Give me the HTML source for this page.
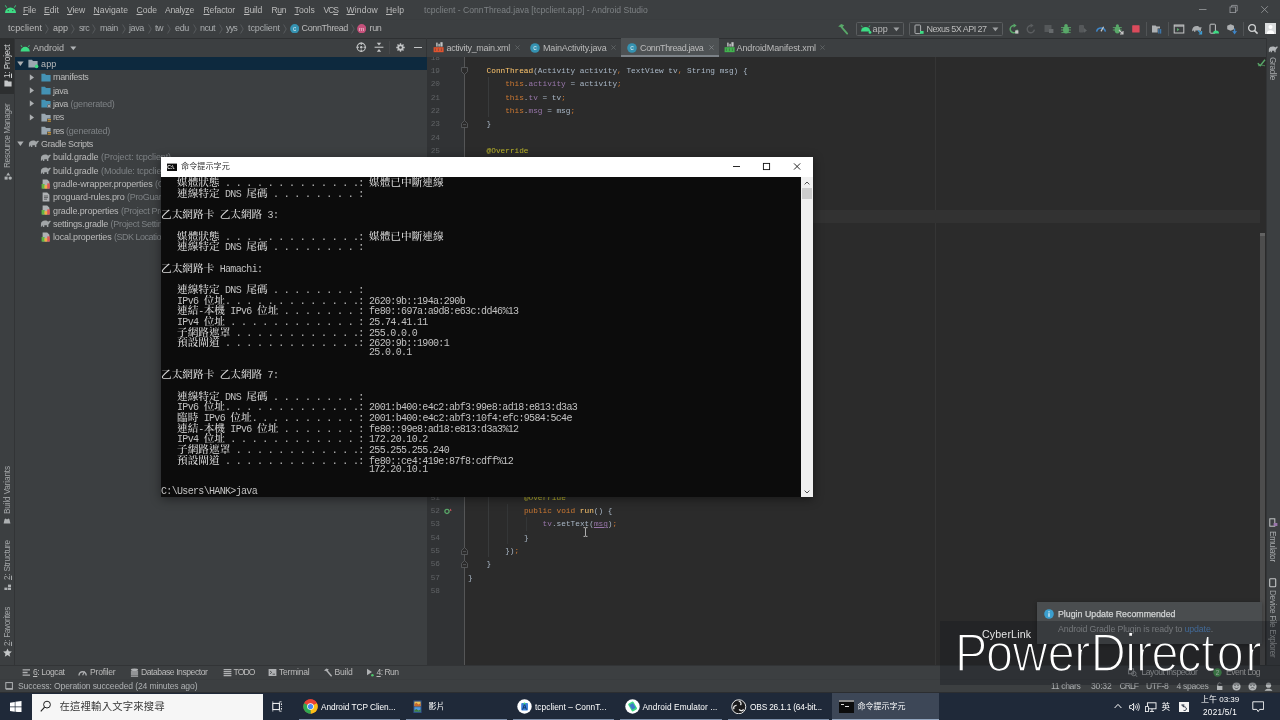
<!DOCTYPE html>
<html lang="zh-Hant"><head><meta charset="utf-8"><title>tcpclient - ConnThread.java [tcpclient.app] - Android Studio</title>
<style>
*{box-sizing:border-box;margin:0;padding:0}
html,body{width:1280px;height:720px;overflow:hidden;background:#3c3f41}
body{position:relative;font-family:"Liberation Sans",sans-serif;}
#scr{position:absolute;left:0;top:0;width:1280px;height:720px;overflow:hidden;opacity:0.999}
.r{position:absolute;display:block}
.t{position:absolute;white-space:pre;height:14px;line-height:14px;font-family:"Liberation Sans","Noto Sans CJK TC",sans-serif}
.m{font-family:"Liberation Mono",monospace}
.cj{font-family:"Liberation Sans","Noto Sans CJK TC",sans-serif}
.v{transform-origin:0 0;transform:rotate(-90deg)}
.vr{transform-origin:0 0;transform:rotate(90deg)}
u{text-decoration:underline;text-underline-offset:0.6px;text-decoration-thickness:0.7px}
#con{position:absolute;left:161px;top:177px;width:640px;height:320px;background:#0c0c0c;overflow:hidden}
#con pre{position:absolute;left:0;top:0;height:10.667px;margin:0;font-family:"Liberation Mono",monospace;font-size:10px;line-height:10.667px;letter-spacing:-0.667px;color:#c2c2c2;white-space:pre}
#con pre b{font-weight:normal;font-family:"Noto Serif CJK TC","Noto Serif CJK SC","Noto Sans CJK TC",serif;font-size:10.667px;letter-spacing:0;line-height:10.667px;color:#dcdcdc;font-weight:500}
</style></head>
<body>
<div id="scr">
<div class="r" style="left:0.0px;top:0.0px;width:1280.0px;height:720.0px;background:#3c3f41;"></div>
<div class="r" style="left:0.0px;top:19.0px;width:1280.0px;height:0.7px;background:#3a3d3f;"></div>
<div class="r" style="left:426.7px;top:56.7px;width:840.3px;height:608.3px;background:#2b2b2b;"></div>
<div class="r" style="left:426.7px;top:56.7px;width:37.8px;height:608.3px;background:#313335;"></div>
<div class="r" style="left:464.0px;top:57.0px;width:0.8px;height:608.0px;background:#555657;"></div>
<div class="r" style="left:935.0px;top:57.0px;width:0.8px;height:608.0px;background:#353535;"></div>
<div class="r" style="left:465.0px;top:210.0px;width:795.0px;height:13.4px;background:#323232;"></div>
<div class="r" style="left:427.0px;top:38.0px;width:840.0px;height:19.0px;background:#3c3f41;"></div>
<div class="r" style="left:0.0px;top:37.5px;width:1280.0px;height:0.9px;background:#2e3032;"></div>
<div class="r" style="left:0.0px;top:38.0px;width:14.5px;height:627.0px;background:#3c3f41;"></div>
<div class="r" style="left:14.3px;top:38.0px;width:0.8px;height:627.0px;background:#323436;"></div>
<div class="r" style="left:1266.5px;top:38.0px;width:13.5px;height:627.0px;background:#3c3f41;"></div>
<div class="r" style="left:1266.0px;top:38.0px;width:0.8px;height:627.0px;background:#323436;"></div>
<div class="r" style="left:426.3px;top:38.0px;width:0.8px;height:19.0px;background:#323436;"></div>
<div class="r" style="left:0.0px;top:664.5px;width:1280.0px;height:0.8px;background:#323436;"></div>
<div class="r" style="left:0.0px;top:679.0px;width:1280.0px;height:0.7px;background:#393c3e;"></div>
<svg class="r" style="left:4.0px;top:4.0px;" width="13" height="10" viewBox="0 0 13 10"><path d="M1 9 A5.5 5.5 0 0 1 12 9 Z" fill="#3ddc84"/><path d="M2.6 3.6 L1.4 1.4 M10.4 3.6 L11.6 1.4" stroke="#3ddc84" stroke-width="0.9"/><circle cx="4.2" cy="6.6" r="0.6" fill="#3c3f41"/><circle cx="8.8" cy="6.6" r="0.6" fill="#3c3f41"/></svg>
<span class="t " style="left:23.0px;top:2.5px;font-size:8.60px;color:#bbbbbb;letter-spacing:-0.215px;"><u>F</u>ile</span>
<span class="t " style="left:44.0px;top:2.5px;font-size:8.60px;color:#bbbbbb;letter-spacing:0.045px;"><u>E</u>dit</span>
<span class="t " style="left:67.0px;top:2.5px;font-size:8.60px;color:#bbbbbb;letter-spacing:-0.121px;"><u>V</u>iew</span>
<span class="t " style="left:93.5px;top:2.5px;font-size:8.60px;color:#bbbbbb;letter-spacing:0.070px;"><u>N</u>avigate</span>
<span class="t " style="left:136.5px;top:2.5px;font-size:8.60px;color:#bbbbbb;letter-spacing:-0.015px;"><u>C</u>ode</span>
<span class="t " style="left:165.0px;top:2.5px;font-size:8.60px;color:#bbbbbb;letter-spacing:-0.228px;">Analy<u>z</u>e</span>
<span class="t " style="left:203.5px;top:2.5px;font-size:8.60px;color:#bbbbbb;letter-spacing:-0.125px;"><u>R</u>efactor</span>
<span class="t " style="left:244.0px;top:2.5px;font-size:8.60px;color:#bbbbbb;letter-spacing:-0.225px;"><u>B</u>uild</span>
<span class="t " style="left:271.5px;top:2.5px;font-size:8.60px;color:#bbbbbb;letter-spacing:-0.426px;">R<u>u</u>n</span>
<span class="t " style="left:294.5px;top:2.5px;font-size:8.60px;color:#bbbbbb;letter-spacing:0.085px;"><u>T</u>ools</span>
<span class="t " style="left:323.5px;top:2.5px;font-size:8.60px;color:#bbbbbb;letter-spacing:-1.061px;">VC<u>S</u></span>
<span class="t " style="left:346.5px;top:2.5px;font-size:8.60px;color:#bbbbbb;letter-spacing:0.152px;"><u>W</u>indow</span>
<span class="t " style="left:386.0px;top:2.5px;font-size:8.60px;color:#bbbbbb;letter-spacing:0.078px;"><u>H</u>elp</span>
<span class="t " style="left:424.0px;top:2.5px;font-size:8.60px;color:#7d8184;letter-spacing:-0.004px;">tcpclient - ConnThread.java [tcpclient.app] - Android Studio</span>
<svg class="r" style="left:1195.0px;top:0.0px;" width="85" height="19" viewBox="0 0 85 19"><path d="M4 9.5h7.5" stroke="#9a9da0" stroke-width="0.8"/><rect x="35" y="7" width="5.6" height="5.6" fill="none" stroke="#9a9da0" stroke-width="0.8"/><path d="M36.6 7V5.4h5.6V11h-1.6" fill="none" stroke="#9a9da0" stroke-width="0.8"/><path d="M66.3 6.2l6.6 6.6M72.9 6.2l-6.6 6.6" stroke="#9a9da0" stroke-width="0.8"/></svg>
<span class="t " style="left:8.0px;top:21.3px;font-size:9.00px;color:#bbb;letter-spacing:0.109px;">tcpclient</span>
<span class="t " style="left:53.0px;top:21.3px;font-size:9.00px;color:#bbb;letter-spacing:-0.006px;">app</span>
<span class="t " style="left:79.0px;top:21.3px;font-size:9.00px;color:#a9acae;letter-spacing:-0.666px;">src</span>
<span class="t " style="left:100.0px;top:21.3px;font-size:9.00px;color:#a9acae;letter-spacing:-0.377px;">main</span>
<span class="t " style="left:129.0px;top:21.3px;font-size:9.00px;color:#a9acae;letter-spacing:-0.378px;">java</span>
<span class="t " style="left:155.0px;top:21.3px;font-size:9.00px;color:#a9acae;letter-spacing:-0.500px;">tw</span>
<span class="t " style="left:175.0px;top:21.3px;font-size:9.00px;color:#a9acae;letter-spacing:-0.339px;">edu</span>
<span class="t " style="left:200.0px;top:21.3px;font-size:9.00px;color:#a9acae;letter-spacing:-0.503px;">ncut</span>
<span class="t " style="left:226.0px;top:21.3px;font-size:9.00px;color:#a9acae;letter-spacing:-0.833px;">yys</span>
<span class="t " style="left:248.0px;top:21.3px;font-size:9.00px;color:#a9acae;letter-spacing:-0.113px;">tcpclient</span>
<span class="t " style="left:301.5px;top:21.3px;font-size:9.00px;color:#bbb;letter-spacing:-0.353px;">ConnThread</span>
<span class="t " style="left:369.5px;top:21.3px;font-size:9.00px;color:#bbb;letter-spacing:-0.336px;">run</span>
<svg class="r" style="left:45.0px;top:23.5px;" width="4" height="10" viewBox="0 0 4 10"><path d="M0.6 0.5L3.2 5L0.6 9.5" fill="none" stroke="#5e6264" stroke-width="0.8"/></svg>
<svg class="r" style="left:71.0px;top:23.5px;" width="4" height="10" viewBox="0 0 4 10"><path d="M0.6 0.5L3.2 5L0.6 9.5" fill="none" stroke="#5e6264" stroke-width="0.8"/></svg>
<svg class="r" style="left:92.0px;top:23.5px;" width="4" height="10" viewBox="0 0 4 10"><path d="M0.6 0.5L3.2 5L0.6 9.5" fill="none" stroke="#5e6264" stroke-width="0.8"/></svg>
<svg class="r" style="left:121.5px;top:23.5px;" width="4" height="10" viewBox="0 0 4 10"><path d="M0.6 0.5L3.2 5L0.6 9.5" fill="none" stroke="#5e6264" stroke-width="0.8"/></svg>
<svg class="r" style="left:147.5px;top:23.5px;" width="4" height="10" viewBox="0 0 4 10"><path d="M0.6 0.5L3.2 5L0.6 9.5" fill="none" stroke="#5e6264" stroke-width="0.8"/></svg>
<svg class="r" style="left:167.0px;top:23.5px;" width="4" height="10" viewBox="0 0 4 10"><path d="M0.6 0.5L3.2 5L0.6 9.5" fill="none" stroke="#5e6264" stroke-width="0.8"/></svg>
<svg class="r" style="left:192.5px;top:23.5px;" width="4" height="10" viewBox="0 0 4 10"><path d="M0.6 0.5L3.2 5L0.6 9.5" fill="none" stroke="#5e6264" stroke-width="0.8"/></svg>
<svg class="r" style="left:218.5px;top:23.5px;" width="4" height="10" viewBox="0 0 4 10"><path d="M0.6 0.5L3.2 5L0.6 9.5" fill="none" stroke="#5e6264" stroke-width="0.8"/></svg>
<svg class="r" style="left:240.0px;top:23.5px;" width="4" height="10" viewBox="0 0 4 10"><path d="M0.6 0.5L3.2 5L0.6 9.5" fill="none" stroke="#5e6264" stroke-width="0.8"/></svg>
<svg class="r" style="left:283.0px;top:23.5px;" width="4" height="10" viewBox="0 0 4 10"><path d="M0.6 0.5L3.2 5L0.6 9.5" fill="none" stroke="#5e6264" stroke-width="0.8"/></svg>
<svg class="r" style="left:351.0px;top:23.5px;" width="4" height="10" viewBox="0 0 4 10"><path d="M0.6 0.5L3.2 5L0.6 9.5" fill="none" stroke="#5e6264" stroke-width="0.8"/></svg>
<svg class="r" style="left:289.5px;top:23.5px;" width="9.4" height="9.4" viewBox="0 0 9.4 9.4"><circle cx="4.7" cy="4.7" r="4.6" fill="#3592b1"/><text x="4.7" y="7" font-size="6.5" font-family="Liberation Sans,sans-serif" text-anchor="middle" fill="#d6e9f0">c</text></svg>
<svg class="r" style="left:357.0px;top:23.5px;" width="9.4" height="9.4" viewBox="0 0 9.4 9.4"><circle cx="4.7" cy="4.7" r="4.6" fill="#c5517b"/><text x="4.7" y="6.8" font-size="6.2" font-family="Liberation Sans,sans-serif" text-anchor="middle" fill="#f3d6e0">m</text></svg>
<svg class="r" style="left:836.0px;top:22.5px;" width="13" height="12" viewBox="0 0 13 12"><path d="M2.2 3.6L5.2 1l3 1.2-2 2.2z" fill="#59a869"/><path d="M5.6 4.2l5.6 6.4" stroke="#59a869" stroke-width="1.8" stroke-linecap="round"/></svg>
<div class="r" style="left:855.5px;top:21.5px;width:48.5px;height:14.5px;background:transparent;border:0.8px solid #5a5d5f;border-radius:1.5px"></div>
<svg class="r" style="left:860.0px;top:24.0px;" width="12" height="10" viewBox="0 0 12 10"><path d="M1 7.6A4.6 4.6 0 0 1 10.2 7.6Z" fill="#3ddc84"/><path d="M2.4 3.3L1.4 1.5M8.8 3.3l1-1.8" stroke="#3ddc84" stroke-width="0.8"/><circle cx="10" cy="8.4" r="1.4" fill="#3ddc84"/></svg>
<span class="t " style="left:872.5px;top:21.7px;font-size:9.00px;color:#bbb;letter-spacing:0.161px;">app</span>
<svg class="r" style="left:893.0px;top:26.5px;" width="7" height="5" viewBox="0 0 7 5"><path d="M0.4 0.6h6L3.4 4.2z" fill="#9da0a2"/></svg>
<div class="r" style="left:908.5px;top:21.5px;width:94.0px;height:14.5px;background:transparent;border:0.8px solid #5a5d5f;border-radius:1.5px"></div>
<svg class="r" style="left:914.0px;top:23.5px;" width="11" height="11" viewBox="0 0 11 11"><rect x="1" y="1" width="5.6" height="8.6" rx="0.8" fill="none" stroke="#afb1b3" stroke-width="1"/><rect x="6" y="7" width="3.6" height="2.8" fill="#3ddc84"/></svg>
<span class="t " style="left:926.5px;top:21.7px;font-size:9.00px;color:#bbb;letter-spacing:-0.536px;">Nexus 5X API 27</span>
<svg class="r" style="left:991.5px;top:26.5px;" width="7" height="5" viewBox="0 0 7 5"><path d="M0.4 0.6h6L3.4 4.2z" fill="#9da0a2"/></svg>
<svg class="r" style="left:1008.0px;top:22.7px;" width="12" height="12" viewBox="0 0 12 12"><path d="M9.4 6.6A3.6 3.6 0 1 1 6.4 2.6" fill="none" stroke="#59a869" stroke-width="1.5"/><path d="M5.6 0.4l3 2.2-3 2.2z" fill="#59a869"/><rect x="7.2" y="7.4" width="3.2" height="3.2" fill="#c8c8c8"/></svg>
<svg class="r" style="left:1025.0px;top:22.7px;" width="12" height="12" viewBox="0 0 12 12"><path d="M9.4 6.6A3.6 3.6 0 1 1 6.4 2.6" fill="none" stroke="#5a5d5f" stroke-width="1.4"/><path d="M5.6 0.4l3 2.2-3 2.2z" fill="#5a5d5f"/></svg>
<svg class="r" style="left:1042.5px;top:22.7px;" width="12" height="12" viewBox="0 0 12 12"><rect x="1.5" y="2" width="7" height="7" fill="#55585a"/><rect x="6" y="6" width="4.4" height="4" fill="#666a6c"/></svg>
<svg class="r" style="left:1060.0px;top:22.7px;" width="12" height="12" viewBox="0 0 12 12"><ellipse cx="6" cy="6.8" rx="3" ry="3.8" fill="#59a869"/><circle cx="6" cy="2.6" r="1.7" fill="#59a869"/><path d="M1 4.6h10M1 7h10M1.4 9.6h9.2" stroke="#59a869" stroke-width="0.9"/></svg>
<svg class="r" style="left:1077.0px;top:22.7px;" width="12" height="12" viewBox="0 0 12 12"><rect x="2" y="2" width="5" height="7.5" rx="1" fill="#55585a"/><path d="M7 5l3 2.4-3 2.4z" fill="#5d6163"/></svg>
<svg class="r" style="left:1094.5px;top:22.7px;" width="12" height="12" viewBox="0 0 12 12"><path d="M1.6 8.6A4.5 4.5 0 0 1 10.4 8.6" fill="none" stroke="#3e86c9" stroke-width="1.5"/><path d="M6 8.4L8.6 3.8" stroke="#c8c8c8" stroke-width="1.2"/></svg>
<svg class="r" style="left:1112.0px;top:22.7px;" width="12" height="12" viewBox="0 0 12 12"><ellipse cx="5.4" cy="6.8" rx="2.8" ry="3.6" fill="#59a869"/><circle cx="5.4" cy="2.8" r="1.6" fill="#59a869"/><path d="M0.8 4.6h9M0.8 7h9" stroke="#59a869" stroke-width="0.9"/><path d="M7 7l4 4M11 8v3h-3" stroke="#c8c8c8" stroke-width="1.1" fill="none"/></svg>
<svg class="r" style="left:1129.5px;top:22.7px;" width="12" height="12" viewBox="0 0 12 12"><rect x="2.2" y="2.2" width="7.4" height="7.4" rx="0.6" fill="#db4b5c"/></svg>
<div class="r" style="left:1146.0px;top:22.0px;width:0.8px;height:13.5px;background:#515456;"></div>
<svg class="r" style="left:1151.0px;top:22.7px;" width="12" height="12" viewBox="0 0 12 12"><path d="M1 2.4h3.6l1 1.2H9v6H1z" fill="#aeb1b3"/><rect x="6.6" y="5.4" width="4" height="5.4" fill="#3c3f41"/><rect x="7.4" y="6" width="1" height="4.6" fill="#3e86c9"/><rect x="9.2" y="6" width="1" height="4.6" fill="#3e86c9"/></svg>
<div class="r" style="left:1168.0px;top:22.0px;width:0.8px;height:13.5px;background:#515456;"></div>
<svg class="r" style="left:1173.0px;top:22.7px;" width="12" height="12" viewBox="0 0 12 12"><rect x="1.2" y="2" width="9.6" height="8" fill="none" stroke="#c3c5c6" stroke-width="1"/><path d="M1.2 3h9.6" stroke="#c3c5c6" stroke-width="1.2"/><path d="M4 5l2.4 1.6L4 8.2z" fill="#59a869"/></svg>
<svg class="r" style="left:1190.5px;top:22.7px;" width="12" height="12" viewBox="0 0 12 12"><path d="M1 8.4c0-3.6 2-5.4 4.8-5.4 1.6 0 2.4.6 3 1.6l1.8-.6-.6 2.4c0 1.4-.6 2.4-1.4 2.4V7.6H4.4v1.2H3V7.6c-.8 0-1.2.4-2 .8z" fill="#a9acae"/><path d="M7 7.4l3.4 3.4M10.6 8v3H7.8" stroke="#3e9fd6" stroke-width="1.1" fill="none"/></svg>
<svg class="r" style="left:1208.0px;top:22.7px;" width="12" height="12" viewBox="0 0 12 12"><rect x="2" y="1.2" width="5.4" height="9" rx="0.8" fill="none" stroke="#c3c5c6" stroke-width="1"/><path d="M5 10.6a3 3 0 0 1 6 0z" fill="#3ddc84"/></svg>
<svg class="r" style="left:1225.5px;top:22.7px;" width="12" height="12" viewBox="0 0 12 12"><path d="M4.6 1.2l3.4 1.6v3.4L4.6 7.8 1.2 6.2V2.8z" fill="#aeb1b3"/><path d="M8.6 5.4v4M6.8 8l1.8 2.4L10.4 8" stroke="#3e86c9" stroke-width="1.2" fill="none"/></svg>
<div class="r" style="left:1242.5px;top:22.0px;width:0.8px;height:13.5px;background:#515456;"></div>
<svg class="r" style="left:1247.0px;top:22.7px;" width="12" height="12" viewBox="0 0 12 12"><circle cx="5" cy="5" r="3.4" fill="none" stroke="#d0d2d3" stroke-width="1.3"/><path d="M7.6 7.6l3 3" stroke="#d0d2d3" stroke-width="1.5"/></svg>
<div class="r" style="left:1265.0px;top:23.0px;width:11.0px;height:11.0px;background:#dadcdd;"></div>
<svg class="r" style="left:1265.0px;top:23.0px;" width="11" height="11" viewBox="0 0 11 11"><circle cx="5.5" cy="4" r="2" fill="#fff"/><path d="M1.8 11a3.7 3.7 0 0 1 7.4 0z" fill="#fff"/></svg>
<div class="r" style="left:0.0px;top:38.0px;width:14.3px;height:56.0px;background:#2d2f30;"></div>
<span class="t v" style="left:1.2px;top:77.7px;font-size:8.20px;color:#d2d4d5;letter-spacing:-0.114px"><u>1</u>: Project</span>
<svg class="r" style="left:4.0px;top:80.3px;" width="8" height="7" viewBox="0 0 8 7"><path d="M0.4 0.6h3l.8 1h3.4v5H.4z" fill="#c5c7c8"/></svg>
<span class="t v" style="left:1.0px;top:168.3px;font-size:8.20px;color:#a4a7a9;letter-spacing:-0.327px">Resource Manager</span>
<svg class="r" style="left:3.8px;top:171.5px;" width="8.5" height="8.5" viewBox="0 0 8.5 8.5"><path d="M4.2 0.4l2 3H2.2z" fill="#aeb1b3"/><rect x="0.6" y="4.6" width="3" height="3" fill="#aeb1b3"/><circle cx="6.2" cy="6.1" r="1.7" fill="#aeb1b3"/></svg>
<span class="t v" style="left:1.0px;top:514.0px;font-size:8.20px;color:#a4a7a9;letter-spacing:-0.142px">Build Variants</span>
<svg class="r" style="left:3.4px;top:518.0px;" width="8" height="6" viewBox="0 0 8 6"><path d="M0.6 5.6L1.6 1.2 2.6 0.4 4 1.4 5.4 0.4 6.4 1.2 7.4 5.6z" fill="#aeb1b3"/></svg>
<span class="t v" style="left:1.0px;top:580.0px;font-size:8.20px;color:#a4a7a9;letter-spacing:-0.199px"><u>2</u>: Structure</span>
<svg class="r" style="left:3.6px;top:583.5px;" width="7.6" height="6.5" viewBox="0 0 7.6 6.5"><rect x="0.4" y="3.6" width="3" height="2.6" fill="#aeb1b3"/><rect x="4" y="0.6" width="3" height="2.4" fill="#aeb1b3"/><rect x="4" y="3.6" width="3" height="2.6" fill="#aeb1b3"/></svg>
<span class="t v" style="left:1.0px;top:646.0px;font-size:8.20px;color:#a4a7a9;letter-spacing:-0.320px"><u>2</u>: Favorites</span>
<svg class="r" style="left:3.0px;top:648.0px;" width="9" height="9" viewBox="0 0 9 9"><path d="M4.5 0.4l1.25 2.9 3.1.3-2.35 2.05.7 3.05L4.5 7.1 1.8 8.7l.7-3.05L.15 3.6l3.1-.3z" fill="#c5c7c8"/></svg>
<svg class="r" style="left:1268.0px;top:45.0px;" width="10.5" height="7.728" viewBox="0 0 12.5 9.2"><path d="M1 8.6V5.6C1 3 3 1.7 5.6 1.7c1.5 0 2.5.5 3.3 1.2.8-.8 2-1.4 2.8-.6.4.6-.2 1.2-.8.8-.4 1.4-1 2.4-1.8 2.8v2.7H7.5V6.9H4.7v1.7H3.1V6.9C2.5 6.9 2.4 8.6 1 8.6z" fill="#b4b7b9"/></svg>
<span class="t vr" style="left:1279.0px;top:56.5px;font-size:8.20px;color:#a9acae;letter-spacing:-0.269px">Gradle</span>
<svg class="r" style="left:1268.5px;top:517.5px;" width="9" height="9" viewBox="0 0 9 9"><rect x="0.8" y="0.8" width="5" height="7.4" fill="none" stroke="#c3c5c6" stroke-width="1"/><rect x="4.6" y="5" width="3.8" height="3" fill="#9876aa"/></svg>
<span class="t vr" style="left:1279.2px;top:530.5px;font-size:8.20px;color:#a9acae;letter-spacing:-0.227px">Emulator</span>
<svg class="r" style="left:1269.0px;top:578.0px;" width="7.5" height="9.5" viewBox="0 0 7.5 9.5"><rect x="0.7" y="0.7" width="6" height="8" rx="0.8" fill="none" stroke="#c3c5c6" stroke-width="1.1"/></svg>
<span class="t vr" style="left:1279.2px;top:590.0px;font-size:8.20px;color:#9ea1a3;letter-spacing:-0.294px">Device File Explorer</span>
<svg class="r" style="left:20.0px;top:43.5px;" width="10.5" height="8" viewBox="0 0 10.5 8"><path d="M0.6 7.4A4.6 4.6 0 0 1 9.8 7.4Z" fill="#3ddc84"/><path d="M2 3l-1-1.8M8.4 3l1-1.8" stroke="#3ddc84" stroke-width="0.8"/></svg>
<span class="t " style="left:33.0px;top:40.8px;font-size:9.00px;color:#bbb;letter-spacing:-0.003px;">Android</span>
<svg class="r" style="left:70.0px;top:46.0px;" width="7" height="5" viewBox="0 0 7 5"><path d="M0.3 0.5h6L3.3 4.2z" fill="#b0b3b5"/></svg>
<svg class="r" style="left:356.0px;top:42.0px;" width="10.5" height="10.5" viewBox="0 0 10.5 10.5"><circle cx="5.25" cy="5.25" r="4.1" fill="none" stroke="#c3c5c6" stroke-width="1.1"/><circle cx="5.25" cy="5.25" r="1.2" fill="#c3c5c6"/><path d="M5.25 0.4v2.6M5.25 7.5v2.6M.4 5.25H3M7.5 5.25h2.6" stroke="#c3c5c6" stroke-width="1.1"/></svg>
<svg class="r" style="left:373.5px;top:42.0px;" width="10" height="10.5" viewBox="0 0 10 10.5"><path d="M0.6 5.25h8.8" stroke="#c3c5c6" stroke-width="1.1"/><path d="M2.8 0.8h4.4L5 3.4zM2.8 9.7h4.4L5 7.1z" fill="#c3c5c6"/></svg>
<div class="r" style="left:389.3px;top:41.0px;width:0.7px;height:13.0px;background:#47494b;"></div>
<svg class="r" style="left:396.0px;top:42.8px;" width="9" height="9" viewBox="0 0 10.5 10.5"><circle cx="5.25" cy="5.25" r="2.6" fill="none" stroke="#c3c5c6" stroke-width="2"/><path d="M5.25 0.3v2M5.25 8.2v2M.3 5.25h2M8.2 5.25h2M1.75 1.75l1.4 1.4M7.35 7.35l1.4 1.4M8.75 1.75l-1.4 1.4M3.15 7.35l-1.4 1.4" stroke="#c3c5c6" stroke-width="1.6"/></svg>
<div class="r" style="left:414.0px;top:46.6px;width:8.0px;height:1.0px;background:#c3c5c6;"></div>
<div class="r" style="left:15.0px;top:57.0px;width:411.5px;height:13.3px;background:#0d293e;"></div>
<svg class="r" style="left:16.5px;top:60.7px;" width="7" height="6" viewBox="0 0 7 6"><path d="M0.2 0.6h6.4L3.4 5z" fill="#adb0b2"/></svg>
<svg class="r" style="left:28.0px;top:59.2px;" width="11" height="9.5" viewBox="0 0 11 9.5"><path d="M0.4 0.8h3.6l1 1.2h4.6v6.4H.4z" fill="#9aa7b0"/><circle cx="8.6" cy="7.4" r="1.8" fill="#3ddc84"/></svg>
<span class="t " style="left:41.0px;top:57.0px;font-size:9.00px;color:#bbbbbb;letter-spacing:0.161px;">app</span>
<svg class="r" style="left:28.5px;top:73.5px;" width="6" height="7" viewBox="0 0 6 7"><path d="M0.8 0.2v6.4L5 3.4z" fill="#adb0b2"/></svg>
<svg class="r" style="left:40.5px;top:72.5px;" width="11" height="9.5" viewBox="0 0 11 9.5"><path d="M0.4 0.8h3.6l1 1.2h4.6v6.4H.4z" fill="#4492b4"/></svg>
<span class="t " style="left:53.0px;top:70.3px;font-size:9.00px;color:#bbbbbb;letter-spacing:-0.335px;">manifests</span>
<svg class="r" style="left:28.5px;top:86.8px;" width="6" height="7" viewBox="0 0 6 7"><path d="M0.8 0.2v6.4L5 3.4z" fill="#adb0b2"/></svg>
<svg class="r" style="left:40.5px;top:85.8px;" width="11" height="9.5" viewBox="0 0 11 9.5"><path d="M0.4 0.8h3.6l1 1.2h4.6v6.4H.4z" fill="#4492b4"/></svg>
<span class="t " style="left:53.0px;top:83.6px;font-size:9.00px;color:#bbbbbb;letter-spacing:-0.378px;">java</span>
<svg class="r" style="left:28.5px;top:100.2px;" width="6" height="7" viewBox="0 0 6 7"><path d="M0.8 0.2v6.4L5 3.4z" fill="#adb0b2"/></svg>
<svg class="r" style="left:40.5px;top:99.2px;" width="11" height="9.5" viewBox="0 0 11 9.5"><path d="M0.4 0.8h3.6l1 1.2h4.6v6.4H.4z" fill="#4492b4"/><circle cx="8" cy="7" r="2" fill="#3c3f41"/><path d="M6.6 5.6l2.8 2.8M9.4 5.6L6.6 8.4M8 5v4M6 7h4" stroke="#c3c5c6" stroke-width="0.6"/></svg>
<span class="t " style="left:53.0px;top:97.0px;font-size:9.00px;color:#bbbbbb;letter-spacing:-0.378px;">java</span>
<span class="t " style="left:70.6px;top:97.0px;font-size:9.00px;color:#7e8285;letter-spacing:-0.239px;">(generated)</span>
<svg class="r" style="left:28.5px;top:113.5px;" width="6" height="7" viewBox="0 0 6 7"><path d="M0.8 0.2v6.4L5 3.4z" fill="#adb0b2"/></svg>
<svg class="r" style="left:40.5px;top:112.5px;" width="11" height="9.5" viewBox="0 0 11 9.5"><path d="M0.4 0.8h3.6l1 1.2h4.6v6.4H.4z" fill="#9aa7b0"/><rect x="6" y="5.6" width="4.4" height="3.8" fill="#3c3f41"/><path d="M6.6 6.6h3.4M6.6 8.2h3.4" stroke="#e2a53a" stroke-width="0.9"/></svg>
<span class="t " style="left:53.0px;top:110.3px;font-size:9.00px;color:#bbbbbb;letter-spacing:-0.668px;">res</span>
<svg class="r" style="left:40.5px;top:125.8px;" width="11" height="9.5" viewBox="0 0 11 9.5"><path d="M0.4 0.8h3.6l1 1.2h4.6v6.4H.4z" fill="#9aa7b0"/><rect x="6" y="5.6" width="4.4" height="3.8" fill="#3c3f41"/><path d="M6.6 6.6h3.4M6.6 8.2h3.4" stroke="#e2a53a" stroke-width="0.9"/></svg>
<span class="t " style="left:53.0px;top:123.6px;font-size:9.00px;color:#bbbbbb;letter-spacing:-0.668px;">res</span>
<span class="t " style="left:66.1px;top:123.6px;font-size:9.00px;color:#7e8285;letter-spacing:-0.239px;">(generated)</span>
<svg class="r" style="left:16.5px;top:140.7px;" width="7" height="6" viewBox="0 0 7 6"><path d="M0.2 0.6h6.4L3.4 5z" fill="#adb0b2"/></svg>
<svg class="r" style="left:27.5px;top:139.4px;" width="11.5" height="8.464" viewBox="0 0 12.5 9.2"><path d="M1 8.6V5.6C1 3 3 1.7 5.6 1.7c1.5 0 2.5.5 3.3 1.2.8-.8 2-1.4 2.8-.6.4.6-.2 1.2-.8.8-.4 1.4-1 2.4-1.8 2.8v2.7H7.5V6.9H4.7v1.7H3.1V6.9C2.5 6.9 2.4 8.6 1 8.6z" fill="#a2a6a8"/></svg>
<span class="t " style="left:41.0px;top:137.0px;font-size:9.00px;color:#bbbbbb;letter-spacing:-0.359px;">Gradle Scripts</span>
<svg class="r" style="left:40.0px;top:152.7px;" width="11.5" height="8.464" viewBox="0 0 12.5 9.2"><path d="M1 8.6V5.6C1 3 3 1.7 5.6 1.7c1.5 0 2.5.5 3.3 1.2.8-.8 2-1.4 2.8-.6.4.6-.2 1.2-.8.8-.4 1.4-1 2.4-1.8 2.8v2.7H7.5V6.9H4.7v1.7H3.1V6.9C2.5 6.9 2.4 8.6 1 8.6z" fill="#a2a6a8"/></svg>
<span class="t " style="left:53.0px;top:150.3px;font-size:9.00px;color:#bbbbbb;letter-spacing:-0.086px;">build.gradle</span>
<span class="t " style="left:101.1px;top:150.3px;font-size:9.00px;color:#7e8285;letter-spacing:-0.106px;">(Project: tcpclient)</span>
<svg class="r" style="left:40.0px;top:166.0px;" width="11.5" height="8.464" viewBox="0 0 12.5 9.2"><path d="M1 8.6V5.6C1 3 3 1.7 5.6 1.7c1.5 0 2.5.5 3.3 1.2.8-.8 2-1.4 2.8-.6.4.6-.2 1.2-.8.8-.4 1.4-1 2.4-1.8 2.8v2.7H7.5V6.9H4.7v1.7H3.1V6.9C2.5 6.9 2.4 8.6 1 8.6z" fill="#a2a6a8"/></svg>
<span class="t " style="left:53.0px;top:163.6px;font-size:9.00px;color:#bbbbbb;letter-spacing:-0.086px;">build.gradle</span>
<span class="t " style="left:101.1px;top:163.6px;font-size:9.00px;color:#7e8285;letter-spacing:-0.180px;">(Module: tcpclient.app)</span>
<svg class="r" style="left:41.0px;top:178.7px;" width="10" height="10" viewBox="0 0 10 10"><path d="M1.6 0.6h4.6l2.2 2.2v6.6H1.6z" fill="#aeb1b3"/><rect x="0.6" y="5" width="3" height="4.6" fill="#62b543"/><rect x="3.6" y="6.2" width="2.6" height="3.4" fill="#f4af3d"/><rect x="6.2" y="4.4" width="2.6" height="5.2" fill="#e05555"/></svg>
<span class="t " style="left:53.0px;top:177.0px;font-size:9.00px;color:#bbbbbb;letter-spacing:-0.122px;">gradle-wrapper.properties</span>
<span class="t " style="left:155.1px;top:177.0px;font-size:9.00px;color:#7e8285;letter-spacing:-0.414px;">(Gradle Version)</span>
<svg class="r" style="left:41.0px;top:192.0px;" width="10" height="10" viewBox="0 0 10 10"><path d="M1.6 0.6h4.6l2.2 2.2v6.6H1.6z" fill="#aeb1b3"/><path d="M3 4h4M3 5.6h4M3 7.2h3" stroke="#3c3f41" stroke-width="0.7"/></svg>
<span class="t " style="left:53.0px;top:190.3px;font-size:9.00px;color:#bbbbbb;letter-spacing:-0.141px;">proguard-rules.pro</span>
<span class="t " style="left:127.1px;top:190.3px;font-size:9.00px;color:#7e8285;letter-spacing:-0.343px;">(ProGuard Rules for tcpclient.app)</span>
<svg class="r" style="left:41.0px;top:205.3px;" width="10" height="10" viewBox="0 0 10 10"><path d="M1.6 0.6h4.6l2.2 2.2v6.6H1.6z" fill="#aeb1b3"/><rect x="0.6" y="5" width="3" height="4.6" fill="#62b543"/><rect x="3.6" y="6.2" width="2.6" height="3.4" fill="#f4af3d"/><rect x="6.2" y="4.4" width="2.6" height="5.2" fill="#e05555"/></svg>
<span class="t " style="left:53.0px;top:203.6px;font-size:9.00px;color:#bbbbbb;letter-spacing:-0.120px;">gradle.properties</span>
<span class="t " style="left:121.1px;top:203.6px;font-size:9.00px;color:#7e8285;letter-spacing:-0.331px;">(Project Properties)</span>
<svg class="r" style="left:40.0px;top:219.4px;" width="11.5" height="8.464" viewBox="0 0 12.5 9.2"><path d="M1 8.6V5.6C1 3 3 1.7 5.6 1.7c1.5 0 2.5.5 3.3 1.2.8-.8 2-1.4 2.8-.6.4.6-.2 1.2-.8.8-.4 1.4-1 2.4-1.8 2.8v2.7H7.5V6.9H4.7v1.7H3.1V6.9C2.5 6.9 2.4 8.6 1 8.6z" fill="#a2a6a8"/></svg>
<span class="t " style="left:53.0px;top:217.0px;font-size:9.00px;color:#bbbbbb;letter-spacing:-0.236px;">settings.gradle</span>
<span class="t " style="left:110.6px;top:217.0px;font-size:9.00px;color:#7e8285;letter-spacing:-0.313px;">(Project Settings)</span>
<svg class="r" style="left:41.0px;top:232.0px;" width="10" height="10" viewBox="0 0 10 10"><path d="M1.6 0.6h4.6l2.2 2.2v6.6H1.6z" fill="#aeb1b3"/><rect x="0.6" y="5" width="3" height="4.6" fill="#62b543"/><rect x="3.6" y="6.2" width="2.6" height="3.4" fill="#f4af3d"/><rect x="6.2" y="4.4" width="2.6" height="5.2" fill="#e05555"/></svg>
<span class="t " style="left:53.0px;top:230.3px;font-size:9.00px;color:#bbbbbb;letter-spacing:-0.158px;">local.properties</span>
<span class="t " style="left:114.1px;top:230.3px;font-size:9.00px;color:#7e8285;letter-spacing:-0.509px;">(SDK Location)</span>
<div class="r" style="left:620.5px;top:38.0px;width:98.5px;height:18.5px;background:#4e5254;"></div>
<div class="r" style="left:620.5px;top:54.6px;width:98.5px;height:2.0px;background:#7c8288;"></div>
<svg class="r" style="left:432.5px;top:41.8px;" width="11" height="11" viewBox="0 0 11 11"><rect x="3.2" y="0.6" width="1.4" height="4" fill="#c3c5c6"/><rect x="5.4" y="1.8" width="1.4" height="2.8" fill="#c3c5c6"/><rect x="7.4" y="0.2" width="2.2" height="4.4" fill="#c3c5c6"/><rect x="0.6" y="5.2" width="10" height="5" fill="#e0532f"/><path d="M2.4 6.4v2.6M5.4 6.4v2.6M8.4 6.4v2.6" stroke="#3c3f41" stroke-width="0.9" opacity=".55"/></svg>
<span class="t " style="left:446.5px;top:40.6px;font-size:9.00px;color:#bbb;letter-spacing:-0.295px;">activity_main.xml</span>
<svg class="r" style="left:514.5px;top:45.1px;" width="5" height="5" viewBox="0 0 5 5"><path d="M0.4 0.4l4.2 4.2M4.6 0.4L0.4 4.6" stroke="#6a6e70" stroke-width="0.7"/></svg>
<svg class="r" style="left:530.0px;top:42.6px;" width="10" height="10" viewBox="0 0 10 10"><circle cx="5" cy="5" r="4.8" fill="#3592b1"/><text x="5" y="7.4" font-size="7" font-family="Liberation Sans,sans-serif" text-anchor="middle" fill="#d6e9f0">c</text></svg>
<span class="t " style="left:543.0px;top:40.6px;font-size:9.00px;color:#bbb;letter-spacing:-0.168px;">MainActivity.java</span>
<svg class="r" style="left:611.0px;top:45.1px;" width="5" height="5" viewBox="0 0 5 5"><path d="M0.4 0.4l4.2 4.2M4.6 0.4L0.4 4.6" stroke="#6a6e70" stroke-width="0.7"/></svg>
<svg class="r" style="left:627.0px;top:42.6px;" width="10" height="10" viewBox="0 0 10 10"><circle cx="5" cy="5" r="4.8" fill="#3592b1"/><text x="5" y="7.4" font-size="7" font-family="Liberation Sans,sans-serif" text-anchor="middle" fill="#d6e9f0">c</text></svg>
<span class="t " style="left:640.0px;top:40.6px;font-size:9.00px;color:#bbb;letter-spacing:-0.370px;">ConnThread.java</span>
<svg class="r" style="left:708.5px;top:45.1px;" width="5" height="5" viewBox="0 0 5 5"><path d="M0.4 0.4l4.2 4.2M4.6 0.4L0.4 4.6" stroke="#8a8e90" stroke-width="0.7"/></svg>
<svg class="r" style="left:723.5px;top:41.8px;" width="11" height="11" viewBox="0 0 11 11"><rect x="3.2" y="0.6" width="1.4" height="4" fill="#c3c5c6"/><rect x="5.4" y="1.8" width="1.4" height="2.8" fill="#c3c5c6"/><rect x="7.4" y="0.2" width="2.2" height="4.4" fill="#c3c5c6"/><rect x="0.6" y="5.2" width="10" height="5" fill="#41b44e"/><path d="M2.4 6.4v2.6M5.4 6.4v2.6M8.4 6.4v2.6" stroke="#3c3f41" stroke-width="0.9" opacity=".55"/></svg>
<span class="t " style="left:736.5px;top:40.6px;font-size:9.00px;color:#bbb;letter-spacing:-0.107px;">AndroidManifest.xml</span>
<svg class="r" style="left:820.0px;top:45.1px;" width="5" height="5" viewBox="0 0 5 5"><path d="M0.4 0.4l4.2 4.2M4.6 0.4L0.4 4.6" stroke="#6a6e70" stroke-width="0.7"/></svg>
<div class="r" style="left:427px;top:57px;width:840px;height:608px;overflow:hidden">
<span class="t m" style="left:-7.0px;top:-6.5px;font-size:7.78px;color:#606366;width:20px;text-align:right">18</span>
<span class="t m" style="left:-7.0px;top:6.8px;font-size:7.78px;color:#606366;width:20px;text-align:right">19</span>
<span class="t m" style="left:-7.0px;top:20.1px;font-size:7.78px;color:#606366;width:20px;text-align:right">20</span>
<span class="t m" style="left:-7.0px;top:33.5px;font-size:7.78px;color:#606366;width:20px;text-align:right">21</span>
<span class="t m" style="left:-7.0px;top:46.8px;font-size:7.78px;color:#606366;width:20px;text-align:right">22</span>
<span class="t m" style="left:-7.0px;top:60.1px;font-size:7.78px;color:#606366;width:20px;text-align:right">23</span>
<span class="t m" style="left:-7.0px;top:73.5px;font-size:7.78px;color:#606366;width:20px;text-align:right">24</span>
<span class="t m" style="left:-7.0px;top:86.8px;font-size:7.78px;color:#606366;width:20px;text-align:right">25</span>
<span class="t m" style="left:-7.0px;top:433.5px;font-size:7.78px;color:#606366;width:20px;text-align:right">51</span>
<span class="t m" style="left:-7.0px;top:446.8px;font-size:7.78px;color:#606366;width:20px;text-align:right">52</span>
<span class="t m" style="left:-7.0px;top:460.1px;font-size:7.78px;color:#606366;width:20px;text-align:right">53</span>
<span class="t m" style="left:-7.0px;top:473.5px;font-size:7.78px;color:#606366;width:20px;text-align:right">54</span>
<span class="t m" style="left:-7.0px;top:486.8px;font-size:7.78px;color:#606366;width:20px;text-align:right">55</span>
<span class="t m" style="left:-7.0px;top:500.1px;font-size:7.78px;color:#606366;width:20px;text-align:right">56</span>
<span class="t m" style="left:-7.0px;top:513.5px;font-size:7.78px;color:#606366;width:20px;text-align:right">57</span>
<span class="t m" style="left:-7.0px;top:526.8px;font-size:7.78px;color:#606366;width:20px;text-align:right">58</span>
<span class="t m" style="left:59.6px;top:6.8px;font-size:7.78px;color:#a9b7c6"><span style="color:#ffc66d">ConnThread</span>(Activity activity<span style="color:#cc7832">,</span> TextView tv<span style="color:#cc7832">,</span> String msg) {</span>
<span class="t m" style="left:78.2px;top:20.1px;font-size:7.78px;color:#a9b7c6"><span style="color:#cc7832">this</span>.<span style="color:#9876aa">activity</span> = activity<span style="color:#cc7832">;</span></span>
<span class="t m" style="left:78.2px;top:33.5px;font-size:7.78px;color:#a9b7c6"><span style="color:#cc7832">this</span>.<span style="color:#9876aa">tv</span> = tv<span style="color:#cc7832">;</span></span>
<span class="t m" style="left:78.2px;top:46.8px;font-size:7.78px;color:#a9b7c6"><span style="color:#cc7832">this</span>.<span style="color:#9876aa">msg</span> = msg<span style="color:#cc7832">;</span></span>
<span class="t m" style="left:59.6px;top:60.1px;font-size:7.78px;color:#a9b7c6">}</span>
<span class="t m" style="left:59.6px;top:86.8px;font-size:7.78px;color:#a9b7c6"><span style="color:#bbb529">@Override</span></span>
<span class="t m" style="left:96.9px;top:433.5px;font-size:7.78px;color:#a9b7c6"><span style="color:#bbb529">@Override</span></span>
<span class="t m" style="left:96.9px;top:446.8px;font-size:7.78px;color:#a9b7c6"><span style="color:#cc7832">public void </span><span style="color:#ffc66d">run</span>() {</span>
<span class="t m" style="left:115.6px;top:460.1px;font-size:7.78px;color:#a9b7c6"><span style="color:#9876aa">tv</span>.setText(<span style="color:#9876aa;text-decoration:underline">msg</span>)<span style="color:#cc7832">;</span></span>
<span class="t m" style="left:96.9px;top:473.5px;font-size:7.78px;color:#a9b7c6">}</span>
<span class="t m" style="left:78.2px;top:486.8px;font-size:7.78px;color:#a9b7c6">})<span style="color:#cc7832">;</span></span>
<span class="t m" style="left:59.6px;top:500.1px;font-size:7.78px;color:#a9b7c6">}</span>
<span class="t m" style="left:40.9px;top:513.5px;font-size:7.78px;color:#a9b7c6">}</span>
</div>
<div class="r" style="left:488.3px;top:77.4px;width:0.7px;height:40.0px;background:#393b3c;"></div>
<div class="r" style="left:488.3px;top:490.8px;width:0.7px;height:66.7px;background:#393b3c;"></div>
<div class="r" style="left:506.8px;top:504.1px;width:0.7px;height:40.0px;background:#343637;"></div>
<div class="r" style="left:526.0px;top:517.4px;width:0.7px;height:13.3px;background:#343637;"></div>
<svg class="r" style="left:460.5px;top:66.8px;" width="7" height="8" viewBox="0 0 7 8"><path d="M0.5 0.5h6v4L3.5 7.5 0.5 4.5z" fill="#2b2b2b" stroke="#5d6062" stroke-width="0.8"/></svg>
<svg class="r" style="left:460.5px;top:120.1px;" width="7" height="8" viewBox="0 0 7 8"><path d="M0.5 7.5h6v-4L3.5 0.5 0.5 3.5z" fill="#2b2b2b" stroke="#5d6062" stroke-width="0.8"/><path d="M2 4.6h3" stroke="#5d6062" stroke-width="0.8"/></svg>
<svg class="r" style="left:460.5px;top:546.8px;" width="7" height="8" viewBox="0 0 7 8"><path d="M0.5 7.5h6v-4L3.5 0.5 0.5 3.5z" fill="#2b2b2b" stroke="#5d6062" stroke-width="0.8"/><path d="M2 4.6h3" stroke="#5d6062" stroke-width="0.8"/></svg>
<svg class="r" style="left:460.5px;top:560.1px;" width="7" height="8" viewBox="0 0 7 8"><path d="M0.5 7.5h6v-4L3.5 0.5 0.5 3.5z" fill="#2b2b2b" stroke="#5d6062" stroke-width="0.8"/><path d="M2 4.6h3" stroke="#5d6062" stroke-width="0.8"/></svg>
<svg class="r" style="left:444.3px;top:507.5px;" width="9" height="7" viewBox="0 0 9 7"><circle cx="3" cy="3.4" r="2.1" fill="none" stroke="#59a869" stroke-width="1.3"/><path d="M5.6 2.8l1-2.2 1 2.2z" fill="#db5860"/></svg>
<svg class="r" style="left:1257.0px;top:58.5px;" width="9" height="8" viewBox="0 0 9 8"><path d="M0.8 4.2l2.4 2.6L8 0.8" fill="none" stroke="#59a869" stroke-width="1.4"/><path d="M1 6.8c2.4-.8 4.6-.8 7 0" stroke="#59a869" stroke-width="0.7" fill="none"/></svg>
<div class="r" style="left:1260.0px;top:233.0px;width:5.0px;height:432.0px;background:#4d4d4d;"></div>
<div class="r" style="left:1260.0px;top:232.5px;width:5.0px;height:3.0px;background:#626262;"></div>
<svg class="r" style="left:582.5px;top:527.0px;" width="5" height="10" viewBox="0 0 5 10"><path d="M0.5 0.6h1.6L2.5 1.2 2.9 0.6h1.6M0.5 9.4h1.6l.4-.6.4.6h1.6M2.5 1.2v7.6" fill="none" stroke="#d0d0d0" stroke-width="0.8"/></svg>
<div class="r" style="left:1037.0px;top:601.5px;width:224.5px;height:42.5px;background:#4a4d4f;box-shadow:0 1px 4px rgba(0,0,0,.35)"></div>
<svg class="r" style="left:1043.5px;top:609.0px;" width="10" height="10" viewBox="0 0 10 10"><circle cx="5" cy="5" r="4.8" fill="#3b9fcf"/><rect x="4.4" y="4.2" width="1.2" height="3.6" fill="#e8f4fa"/><rect x="4.4" y="2.2" width="1.2" height="1.2" fill="#e8f4fa"/></svg>
<span class="t " style="left:1058.0px;top:607.3px;font-size:8.80px;color:#d2d4d5;letter-spacing:0.004px;-webkit-text-stroke:0.25px #d2d4d5">Plugin Update Recommended</span>
<span class="t " style="left:1058.0px;top:622.0px;font-size:8.80px;color:#a2a5a7;letter-spacing:-0.145px;">Android Gradle Plugin is ready to <span style="color:#5890cf">update</span>.</span>
<svg class="r" style="left:21.5px;top:667.8px;" width="9" height="9" viewBox="0 0 9 9"><path d="M0.6 1.8h7.4M0.6 4.5h5M0.6 7.2h7.4" stroke="#afb1b3" stroke-width="1.3"/></svg>
<span class="t " style="left:33.0px;top:665.3px;font-size:8.60px;color:#bbb;letter-spacing:-0.431px;"><u>6</u>: Logcat</span>
<svg class="r" style="left:77.5px;top:667.8px;" width="9" height="9" viewBox="0 0 9 9"><path d="M1 7.4A3.6 3.6 0 0 1 8.2 7.4" fill="none" stroke="#afb1b3" stroke-width="1.4"/><path d="M4.6 7.2L6.6 3.4" stroke="#afb1b3" stroke-width="1.1"/></svg>
<span class="t " style="left:90.0px;top:665.3px;font-size:8.60px;color:#bbb;letter-spacing:-0.218px;">Profiler</span>
<svg class="r" style="left:129.5px;top:667.8px;" width="9" height="9" viewBox="0 0 9 9"><ellipse cx="4.5" cy="1.8" rx="3.6" ry="1.3" fill="#afb1b3"/><path d="M0.9 3.2h7.2v1.5H.9zM0.9 5.3h7.2v1.5H.9zM0.9 7.4h7.2v1.3H.9z" fill="#afb1b3"/></svg>
<span class="t " style="left:141.0px;top:665.3px;font-size:8.60px;color:#bbb;letter-spacing:-0.449px;">Database Inspector</span>
<svg class="r" style="left:222.5px;top:667.8px;" width="9" height="9" viewBox="0 0 9 9"><path d="M0.6 1.6h7.8M0.6 3.6h7.8M0.6 5.6h7.8M0.6 7.6h7.8" stroke="#afb1b3" stroke-width="1.2"/></svg>
<span class="t " style="left:233.5px;top:665.3px;font-size:8.60px;color:#bbb;letter-spacing:-0.922px;">TODO</span>
<svg class="r" style="left:268.0px;top:667.8px;" width="9" height="9" viewBox="0 0 9 9"><rect x="0.6" y="1" width="7.8" height="7" fill="#afb1b3"/><path d="M2 3l1.8 1.4L2 5.8M4.6 6.2h2.4" stroke="#3c3f41" stroke-width="0.8" fill="none"/></svg>
<span class="t " style="left:279.0px;top:665.3px;font-size:8.60px;color:#bbb;letter-spacing:-0.250px;">Terminal</span>
<svg class="r" style="left:322.5px;top:667.8px;" width="9" height="9" viewBox="0 0 9 9"><path d="M1 2.6L3.4 0.6l2.4 1L4.2 3.4z" fill="#afb1b3"/><path d="M4.4 3.2l3.8 4.6" stroke="#afb1b3" stroke-width="1.5" stroke-linecap="round"/></svg>
<span class="t " style="left:334.5px;top:665.3px;font-size:8.60px;color:#bbb;letter-spacing:-0.225px;">Build</span>
<svg class="r" style="left:365.5px;top:667.8px;" width="9" height="9" viewBox="0 0 9 9"><path d="M1 0.8v6.4L6 4z" fill="#afb1b3"/><circle cx="6.4" cy="7.2" r="1.3" fill="#4fc46a"/></svg>
<span class="t " style="left:376.5px;top:665.3px;font-size:8.60px;color:#bbb;letter-spacing:-0.556px;"><u>4</u>: Run</span>
<svg class="r" style="left:1127.5px;top:667.8px;" width="10" height="9" viewBox="0 0 10 9"><rect x="0.6" y="0.8" width="5" height="5" fill="none" stroke="#9a9da0" stroke-width="1"/><circle cx="5.8" cy="5.6" r="2.2" fill="none" stroke="#9a9da0" stroke-width="1"/><path d="M7.4 7.2l2 1.6" stroke="#9a9da0" stroke-width="1"/></svg>
<span class="t " style="left:1141.5px;top:665.3px;font-size:8.60px;color:#b0b3b5;letter-spacing:-0.474px;">Layout Inspector</span>
<svg class="r" style="left:1213.0px;top:667.8px;" width="9" height="9" viewBox="0 0 9 9"><circle cx="4.5" cy="4.5" r="4.2" fill="#499c54"/><text x="4.5" y="6.8" font-size="6.4" font-family="Liberation Sans,sans-serif" text-anchor="middle" fill="#d5ead8">2</text></svg>
<span class="t " style="left:1226.0px;top:665.3px;font-size:8.60px;color:#bbb;letter-spacing:-0.526px;">Event Log</span>
<svg class="r" style="left:4.5px;top:682.2px;" width="9" height="8" viewBox="0 0 9 8"><rect x="0.8" y="0.6" width="6.6" height="6" fill="none" stroke="#afb1b3" stroke-width="1"/><path d="M0.8 7.4h7.2" stroke="#afb1b3" stroke-width="0.8"/></svg>
<span class="t " style="left:18.0px;top:679.2px;font-size:8.60px;color:#aeb1b3;letter-spacing:-0.144px;">Success: Operation succeeded (24 minutes ago)</span>
<span class="t " style="left:1051.0px;top:679.2px;font-size:8.60px;color:#aeb1b3;letter-spacing:-0.356px;">11 chars</span>
<span class="t " style="left:1091.0px;top:679.2px;font-size:8.60px;color:#aeb1b3;letter-spacing:-0.204px;">30:32</span>
<span class="t " style="left:1119.5px;top:679.2px;font-size:8.60px;color:#aeb1b3;letter-spacing:-0.990px;">CRLF</span>
<span class="t " style="left:1146.0px;top:679.2px;font-size:8.60px;color:#aeb1b3;letter-spacing:-0.373px;">UTF-8</span>
<span class="t " style="left:1176.5px;top:679.2px;font-size:8.60px;color:#aeb1b3;letter-spacing:-0.303px;">4 spaces</span>
<svg class="r" style="left:1216.0px;top:681.7px;" width="8" height="9" viewBox="0 0 8 9"><rect x="1" y="4" width="5.4" height="4" fill="#b4b7b9"/><path d="M1.8 4V2.4a1.8 1.8 0 0 1 3.4-.6" fill="none" stroke="#b4b7b9" stroke-width="0.9"/></svg>
<svg class="r" style="left:1231.5px;top:681.7px;" width="9" height="9" viewBox="0 0 9 9"><circle cx="4.5" cy="4.5" r="4" fill="#b4b7b9"/><circle cx="3" cy="3.6" r=".7" fill="#3c3f41"/><circle cx="6" cy="3.6" r=".7" fill="#3c3f41"/><path d="M2.6 5.6c1.2 1.2 2.6 1.2 3.8 0" stroke="#3c3f41" stroke-width=".8" fill="none"/></svg>
<svg class="r" style="left:1247.5px;top:681.7px;" width="9" height="9" viewBox="0 0 9 9"><circle cx="4.5" cy="4.5" r="4" fill="#b4b7b9"/><circle cx="3" cy="3.6" r=".7" fill="#3c3f41"/><circle cx="6" cy="3.6" r=".7" fill="#3c3f41"/><path d="M2.6 6.6c1.2-1.2 2.6-1.2 3.8 0" stroke="#3c3f41" stroke-width=".8" fill="none"/></svg>
<svg class="r" style="left:1263.5px;top:681.7px;" width="9" height="9" viewBox="0 0 9 9"><circle cx="4.5" cy="3.2" r="2.6" fill="#b4b7b9"/><path d="M1 8.6c.4-2.6 6.6-2.6 7 0z" fill="#b4b7b9"/><path d="M0.8 8.8h7.4" stroke="#b4b7b9" stroke-width=".8"/></svg>
<div class="r" style="left:0.0px;top:692.2px;width:1280.0px;height:1.0px;background:#2c2e31;"></div>
<div class="r" style="left:0.0px;top:693.0px;width:1280.0px;height:27.0px;background:#1f2939;"></div>
<svg class="r" style="left:10.3px;top:700.5px;" width="11.5" height="11.5" viewBox="0 0 12.5 12.5"><path d="M0 1.8L5.2 1v5H0zM5.9 0.9L12.5 0v6H5.9zM0 6.7h5.2v5L0 10.9zM5.9 6.7h6.6v5.8l-6.6-.9z" fill="#fff"/></svg>
<div class="r" style="left:32.0px;top:693.7px;width:230.5px;height:26.3px;background:#f6f6f6;"></div>
<svg class="r" style="left:39.5px;top:700.0px;" width="12" height="13" viewBox="0 0 12 13"><circle cx="7" cy="4.6" r="3.4" fill="none" stroke="#222" stroke-width="1"/><path d="M4.6 7.2L0.8 11.4" stroke="#222" stroke-width="1.1"/></svg>
<span class="t cj" style="left:59.5px;top:700.0px;font-size:10.40px;color:#3a3a3a;letter-spacing:0.15px">在這裡輸入文字來搜尋</span>
<svg class="r" style="left:272.0px;top:700.5px;" width="11.5" height="11" viewBox="0 0 11.5 11"><rect x="0.8" y="2.4" width="6.6" height="6.2" fill="none" stroke="#fff" stroke-width="1"/><path d="M0.8 0.6v1M7.4 0.6v1M0.8 9.4v1M7.4 9.4v1M9.4 2.4v1.6M9.4 5.4v.6M9.4 7v1.6" stroke="#fff" stroke-width="1"/><path d="M8 0.8h1.6M8 10.2h1.6" stroke="#fff" stroke-width=".8"/></svg>
<div class="r" style="left:298.5px;top:718.7px;width:101.3px;height:1.3px;background:#7d8fa9;"></div>
<div class="r" style="left:405.7px;top:718.7px;width:101.3px;height:1.3px;background:#7d8fa9;"></div>
<div class="r" style="left:513.0px;top:718.7px;width:101.3px;height:1.3px;background:#7d8fa9;"></div>
<div class="r" style="left:620.3px;top:718.7px;width:101.3px;height:1.3px;background:#7d8fa9;"></div>
<div class="r" style="left:727.7px;top:718.7px;width:101.3px;height:1.3px;background:#7d8fa9;"></div>
<div class="r" style="left:832.0px;top:693.3px;width:107.0px;height:26.7px;background:#3d4757;"></div>
<div class="r" style="left:832.0px;top:718.8px;width:107.0px;height:1.2px;background:#93a6bf;"></div>
<svg class="r" style="left:302.5px;top:698.5px;" width="15" height="15" viewBox="0 0 15 15"><circle cx="7.5" cy="7.5" r="7.2" fill="#e94235"/><path d="M7.5 7.5L1.3 3.9A7.2 7.2 0 0 0 7.9 14.7z" fill="#2fa950"/><path d="M7.5 7.5l.4 7.2A7.2 7.2 0 0 0 13.8 3.9z" fill="#fbc116"/><path d="M7.5 7.5L1.3 3.9A7.2 7.2 0 0 1 13.8 3.9z" fill="#e94235"/><circle cx="7.5" cy="7.5" r="3.3" fill="#fff"/><circle cx="7.5" cy="7.5" r="2.6" fill="#4a8af4"/></svg>
<span class="t " style="left:321.0px;top:699.6px;font-size:8.30px;color:#fff;letter-spacing:-0.043px;">Android TCP Clien...</span>
<svg class="r" style="left:412.5px;top:699.5px;" width="9" height="13.5" viewBox="0 0 9 13.5"><rect x="0.4" y="0.4" width="8.2" height="12.7" fill="#2d4f86"/><rect x="1.4" y="1.6" width="6.2" height="4.6" fill="#e8c15a"/><rect x="1.4" y="7.2" width="6.2" height="4.6" fill="#4f9be0"/><path d="M1.4 4.2l2-1.4 2 1.6 2.2-1.2v3H1.4z" fill="#c7682f"/><path d="M1.4 10.2l2-1.2 2 1.4 2.2-1v2.4H1.4z" fill="#3f7b3c"/></svg>
<span class="t cj" style="left:428.5px;top:699.9px;font-size:8.00px;color:#fff;">影片</span>
<svg class="r" style="left:516.5px;top:699.0px;" width="15" height="15" viewBox="0 0 15 15"><circle cx="7.5" cy="7.5" r="7.2" fill="#fff"/><rect x="4.2" y="4" width="6.8" height="7.4" rx="1" fill="#3c83dc"/><path d="M5.6 10.6l1.9-5.6 1.9 5.6M6.2 8.8h2.6" stroke="#123a6b" stroke-width="1" fill="none"/><circle cx="7.5" cy="4.4" r="1" fill="#3ddc84"/></svg>
<span class="t " style="left:535.0px;top:699.6px;font-size:8.30px;color:#fff;letter-spacing:0.046px;">tcpclient – ConnT...</span>
<svg class="r" style="left:624.5px;top:699.0px;" width="15" height="15" viewBox="0 0 15 15"><circle cx="7.5" cy="7.5" r="7.2" fill="#fff"/><rect x="4.6" y="3" width="6" height="9" rx="1.2" fill="#3ddc84" transform="rotate(-30 7.5 7.5)"/><rect x="5.6" y="4.6" width="4" height="5.6" fill="#3f77c9" transform="rotate(-30 7.5 7.5)"/></svg>
<span class="t " style="left:642.5px;top:699.6px;font-size:8.30px;color:#fff;letter-spacing:0.082px;">Android Emulator ...</span>
<svg class="r" style="left:731.0px;top:698.5px;" width="15.5" height="15.5" viewBox="0 0 15.5 15.5"><circle cx="7.75" cy="7.75" r="7" fill="#1a1a1c" stroke="#e6e6e6" stroke-width="1"/><path d="M7.6 2.2c2 0 3.2 2 1.9 4M12.6 10.4c-1 1.8-3.4 1.8-4.4-.2M3 10.2c-1-1.8.2-3.8 2.6-3.8" fill="none" stroke="#e6e6e6" stroke-width="1.3"/></svg>
<span class="t " style="left:750.0px;top:699.6px;font-size:8.30px;color:#fff;letter-spacing:-0.174px;">OBS 26.1.1 (64-bit...</span>
<div class="r" style="left:838.5px;top:699.5px;width:15.5px;height:13.0px;background:#0c0c0c;border-top:2px solid #8d8d8d"></div>
<div class="r" style="left:840.5px;top:703.5px;width:3.5px;height:0.9px;background:#ddd;"></div>
<div class="r" style="left:845.0px;top:705.5px;width:4.0px;height:0.9px;background:#ddd;"></div>
<span class="t cj" style="left:857.5px;top:699.9px;font-size:8.00px;color:#fff;">命令提示字元</span>
<svg class="r" style="left:1113.5px;top:703.0px;" width="8" height="6" viewBox="0 0 8 6"><path d="M0.6 5L4 1.4 7.4 5" fill="none" stroke="#fff" stroke-width="1"/></svg>
<svg class="r" style="left:1128.5px;top:701.5px;" width="11" height="10" viewBox="0 0 11 10"><path d="M0.6 3.6h1.8L4.6 1.4v7.2L2.4 6.4H.6z" fill="none" stroke="#fff" stroke-width=".9"/><path d="M6 3.4c.8.8.8 2.4 0 3.2M7.4 2.2c1.4 1.6 1.4 4 0 5.6M8.8 1c2 2.4 2 5.6 0 8" fill="none" stroke="#fff" stroke-width=".8"/></svg>
<svg class="r" style="left:1144.5px;top:701.5px;" width="12" height="10.5" viewBox="0 0 12 10.5"><rect x="2.4" y="0.8" width="8.6" height="6" fill="none" stroke="#fff" stroke-width=".9"/><path d="M5 9.6h4M7 6.8v2.8" stroke="#fff" stroke-width=".9"/><rect x="0.5" y="4.6" width="3" height="5" fill="#1f2939" stroke="#fff" stroke-width=".8"/></svg>
<span class="t cj" style="left:1161.5px;top:699.8px;font-size:8.60px;color:#fff;">英</span>
<div class="r" style="left:1178.5px;top:701.5px;width:10.5px;height:10.5px;background:#f4f4f4;"></div>
<svg class="r" style="left:1178.5px;top:701.5px;" width="10.5" height="10.5" viewBox="0 0 10.5 10.5"><path d="M2.4 3h3M4 3v1.6c2 0 3.4.8 3.4 2.2S6 8.8 4.6 8.4" fill="none" stroke="#1f2939" stroke-width="1"/></svg>
<span class="t cj" style="left:1201.0px;top:693.0px;font-size:8.00px;color:#fff;">上午 03:39</span>
<span class="t " style="left:1203.0px;top:705.6px;font-size:8.20px;color:#fff;letter-spacing:0.260px;">2021/5/1</span>
<svg class="r" style="left:1251.5px;top:700.5px;" width="12.5" height="12" viewBox="0 0 12.5 12"><path d="M0.8 0.8h10.8v7.6H7.6L6.2 10.6 4.8 8.4H.8z" fill="none" stroke="#fff" stroke-width=".9"/></svg>
<div class="r" style="left:161.0px;top:157.0px;width:652.0px;height:340.0px;background:#0c0c0c;box-shadow:0 2px 10px rgba(0,0,0,.45)"></div>
<div class="r" style="left:161.0px;top:157.0px;width:652.0px;height:20.0px;background:#ffffff;"></div>
<div class="r" style="left:166.5px;top:162.5px;width:10.5px;height:8.0px;background:#0c0c0c;border-top:1.6px solid #9a9a9a"></div>
<span class="t" style="left:167.3px;top:160.2px;font-size:5px;color:#eee;font-weight:bold;letter-spacing:-0.2px">C:\.</span>
<span class="t cj" style="left:181.0px;top:159.5px;font-size:8.10px;color:#2e2e2e;letter-spacing:0.05px">命令提示字元</span>
<svg class="r" style="left:731.0px;top:161.0px;" width="72" height="11" viewBox="0 0 72 11"><path d="M2 5.5h7" stroke="#111" stroke-width="0.9"/><rect x="32.4" y="2.4" width="6.2" height="6.2" fill="none" stroke="#111" stroke-width="0.9"/><path d="M63 2.4l6.2 6.2M69.2 2.4L63 8.6" stroke="#111" stroke-width="0.9"/></svg>
<div class="r" style="left:801.0px;top:177.0px;width:12.0px;height:320.0px;background:#f0f0f0;"></div>
<div class="r" style="left:801.8px;top:188.3px;width:10.4px;height:10.6px;background:#cdcdcd;"></div>
<svg class="r" style="left:804.0px;top:181.0px;" width="6" height="4" viewBox="0 0 6 4"><path d="M0.6 3.4L3 1l2.4 2.4" fill="none" stroke="#505050" stroke-width="1"/></svg>
<svg class="r" style="left:804.0px;top:489.5px;" width="6" height="4" viewBox="0 0 6 4"><path d="M0.6 0.6L3 3l2.4-2.4" fill="none" stroke="#505050" stroke-width="1"/></svg>
<div id="con">
<pre style="top:0.20px">   <b>媒體狀態</b> . . . . . . . . . . . . .: <b>媒體已中斷連線</b></pre>
<pre style="top:10.87px">   <b>連線特定</b> DNS <b>尾碼</b> . . . . . . . . :</pre>
<pre style="top:32.20px"><b>乙太網路卡</b> <b>乙太網路</b> 3:</pre>
<pre style="top:53.53px">   <b>媒體狀態</b> . . . . . . . . . . . . .: <b>媒體已中斷連線</b></pre>
<pre style="top:64.20px">   <b>連線特定</b> DNS <b>尾碼</b> . . . . . . . . :</pre>
<pre style="top:85.53px"><b>乙太網路卡</b> Hamachi:</pre>
<pre style="top:106.87px">   <b>連線特定</b> DNS <b>尾碼</b> . . . . . . . . :</pre>
<pre style="top:117.53px">   IPv6 <b>位址</b>. . . . . . . . . . . . .: 2620:9b::194a:290b</pre>
<pre style="top:128.20px">   <b>連結</b>-<b>本機</b> IPv6 <b>位址</b> . . . . . . . : fe80::697a:a9d8:e63c:dd46%13</pre>
<pre style="top:138.87px">   IPv4 <b>位址</b> . . . . . . . . . . . . : 25.74.41.11</pre>
<pre style="top:149.53px">   <b>子網路遮罩</b> . . . . . . . . . . . .: 255.0.0.0</pre>
<pre style="top:160.20px">   <b>預設閘道</b> . . . . . . . . . . . . .: 2620:9b::1900:1</pre>
<pre style="top:170.87px">                                       25.0.0.1</pre>
<pre style="top:192.20px"><b>乙太網路卡</b> <b>乙太網路</b> 7:</pre>
<pre style="top:213.53px">   <b>連線特定</b> DNS <b>尾碼</b> . . . . . . . . :</pre>
<pre style="top:224.20px">   IPv6 <b>位址</b>. . . . . . . . . . . . .: 2001:b400:e4c2:abf3:99e8:ad18:e813:d3a3</pre>
<pre style="top:234.87px">   <b>臨時</b> IPv6 <b>位址</b>. . . . . . . . . . : 2001:b400:e4c2:abf3:10f4:efc:9584:5c4e</pre>
<pre style="top:245.53px">   <b>連結</b>-<b>本機</b> IPv6 <b>位址</b> . . . . . . . : fe80::99e8:ad18:e813:d3a3%12</pre>
<pre style="top:256.20px">   IPv4 <b>位址</b> . . . . . . . . . . . . : 172.20.10.2</pre>
<pre style="top:266.87px">   <b>子網路遮罩</b> . . . . . . . . . . . .: 255.255.255.240</pre>
<pre style="top:277.53px">   <b>預設閘道</b> . . . . . . . . . . . . .: fe80::ce4:419e:87f8:cdff%12</pre>
<pre style="top:288.20px">                                       172.20.10.1</pre>
<pre style="top:309.53px">C:\Users\HANK&gt;java</pre>
</div>
<div class="r" style="left:940.0px;top:621.3px;width:340.0px;height:63.7px;background:rgba(20,22,27,0.32);"></div>
<svg class="r" style="left:940.0px;top:620.8px;" width="340" height="70" viewBox="0 0 340 70"><defs><mask id="thin" maskUnits="userSpaceOnUse" x="0" y="0" width="400" height="70"><rect x="0" y="0" width="400" height="70" fill="#fff"/><text x="16.77 51.30 81.13 120.46 150.13 168.39 206.90 219.07 236.38 265.01 291.98 309.34 341.36" y="49.9" font-family="Liberation Sans,sans-serif" font-size="54.2" fill="none" stroke="#000" stroke-width="1.75">PowerDirector</text></mask></defs><text x="16.77 51.30 81.13 120.46 150.13 168.39 206.90 219.07 236.38 265.01 291.98 309.34 341.36" y="49.9" font-family="Liberation Sans,sans-serif" font-size="54.2" transform="scale(0.895,1)" fill="#fff" mask="url(#thin)">PowerDirector</text><text x="42" y="17.3" font-family="Liberation Sans,sans-serif" font-size="10.6" letter-spacing="0.17" fill="#e4e4e4">CyberLink</text></svg>
</div>
</body></html>
